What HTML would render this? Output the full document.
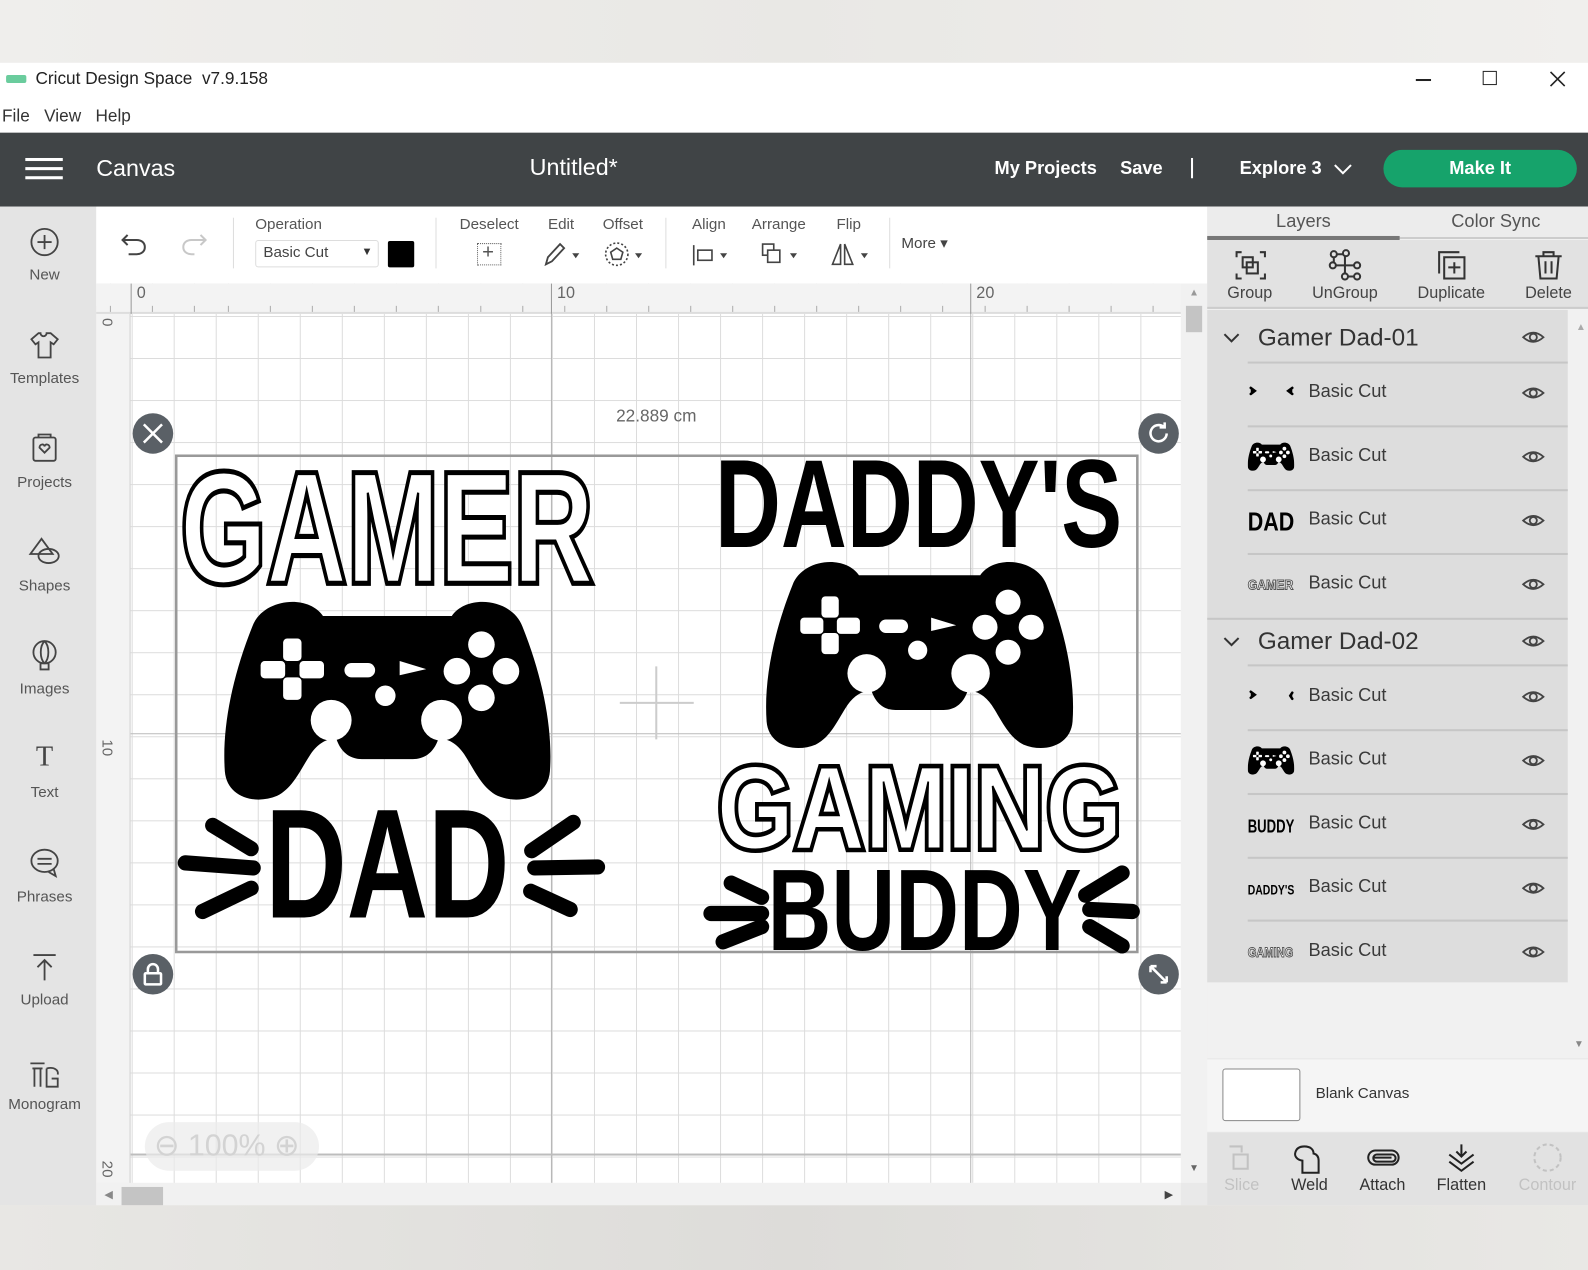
<!DOCTYPE html>
<html><head><meta charset="utf-8"><style>
*{margin:0;padding:0;box-sizing:border-box}
html,body{width:1588px;height:1270px;overflow:hidden;background:#ecebe8}
#w{position:absolute;left:0;top:0;width:1568px;height:1254px;transform:scale(1.01276);transform-origin:0 0;font-family:"Liberation Sans",sans-serif}
.a{position:absolute}
.t{position:absolute;white-space:nowrap}
.lbl{font-size:15px;color:#555;transform:translateX(-50%)}
.side .t{font-size:15px;color:#555;transform:translateX(-50%)}
.sep{position:absolute;height:2px;background:#c6c6c6;left:1232px;width:316px}
.bc{position:absolute;left:1292px;font-size:18px;color:#3a3a3a}
</style></head><body><div id="w">
<div class="a" style="left:0;top:0;width:1568px;height:62px;background:linear-gradient(90deg,#efeeec,#e9e8e5,#f0efed)"></div>
<div class="a" style="left:0;top:1190px;width:1568px;height:64px;background:linear-gradient(90deg,#e8e7e4,#dddcd9,#e9e8e5)"></div>
<div class="a" style="left:0;top:62px;width:1568px;height:69px;background:#fff"></div>
<div class="a" style="left:6px;top:74px;width:20px;height:8px;background:#2bb673;border-radius:2px;opacity:.7"></div>
<div class="t" style="left:35px;top:68px;font-size:17px;color:#222">Cricut Design Space&nbsp;&nbsp;v7.9.158</div>
<div class="a" style="left:1398px;top:78px;width:15px;height:1.5px;background:#222"></div>
<div class="a" style="left:1464px;top:70px;width:14px;height:14px;border:1.5px solid #222"></div>
<svg class="a" style="left:1530px;top:70px" width="16" height="16"><path d="M1 1L15 15M15 1L1 15" stroke="#222" stroke-width="1.6"/></svg>
<div class="t" style="left:2px;top:105px;font-size:17px;color:#333">File&nbsp;&nbsp;&nbsp;View&nbsp;&nbsp;&nbsp;Help</div>
<div class="a" style="left:0;top:131px;width:1568px;height:73px;background:#404446"></div>
<div class="a" style="left:25px;top:156px;width:37px;height:3px;background:#fff;box-shadow:0 9px 0 #fff,0 18px 0 #fff"></div>
<div class="t" style="left:95px;top:153px;font-size:23px;color:#fff">Canvas</div>
<div class="t" style="left:523px;top:152px;font-size:23px;color:#fff">Untitled*</div>
<div class="t" style="left:982px;top:156px;font-size:18px;color:#fff;font-weight:bold">My Projects</div>
<div class="t" style="left:1106px;top:156px;font-size:18px;color:#fff;font-weight:bold">Save</div>
<div class="a" style="left:1176px;top:156px;width:2px;height:20px;background:#fff"></div>
<div class="t" style="left:1224px;top:156px;font-size:18px;color:#fff;font-weight:bold">Explore 3</div>
<svg class="a" style="left:1316px;top:160px" width="20" height="14"><path d="M2 3L10 11L18 3" stroke="#fff" stroke-width="2" fill="none"/></svg>
<div class="a" style="left:1366px;top:148px;width:191px;height:37px;background:#16a36b;border-radius:19px;color:#fff;font-size:18px;font-weight:bold;text-align:center;line-height:37px">Make It</div>
<div class="a side" style="left:0;top:204px;width:95px;height:986px;background:#e4e4e4">
<svg class="a" style="left:29px;top:20px" width="30" height="30" fill="none" stroke="#444" stroke-width="1.8"><circle cx="15" cy="15" r="13"/><path d="M15 8v14M8 15h14"/></svg>
<div class="t" style="left:44px;top:59px">New</div>
<svg class="a" style="left:28px;top:122px" width="32" height="30" fill="none" stroke="#444" stroke-width="1.8"><path d="M10 3L3 9l4 5 3-2v15h12V12l3 2 4-5-7-6h-4c0 2-2 3-3 3s-3-1-3-3z"/></svg>
<div class="t" style="left:44px;top:161px">Templates</div>
<svg class="a" style="left:30px;top:222px" width="28" height="32" fill="none" stroke="#444" stroke-width="1.8"><rect x="3" y="6" width="22" height="23" rx="2"/><path d="M8 6V3h12v3M9 16c0-4 5-4 5-1 0-3 5-3 5 1l-5 5z"/></svg>
<div class="t" style="left:44px;top:264px">Projects</div>
<svg class="a" style="left:27px;top:325px" width="34" height="32" fill="none" stroke="#444" stroke-width="1.8"><path d="M14 3L3 18h22z"/><ellipse cx="21" cy="20" rx="10" ry="7"/></svg>
<div class="t" style="left:44px;top:366px">Shapes</div>
<svg class="a" style="left:30px;top:427px" width="28" height="34" fill="none" stroke="#444" stroke-width="1.8"><circle cx="14" cy="13" r="11"/><path d="M14 2c-5 5-5 17 0 22M14 2c5 5 5 17 0 22M10 24h8v6h-8z"/></svg>
<div class="t" style="left:44px;top:468px">Images</div>
<div class="t" style="left:44px;top:528px;font-size:28px;color:#444;font-family:'Liberation Serif',serif">T</div>
<div class="t" style="left:44px;top:570px">Text</div>
<svg class="a" style="left:28px;top:633px" width="32" height="30" fill="none" stroke="#444" stroke-width="1.8"><ellipse cx="16" cy="13" rx="13" ry="11"/><path d="M9 11h14M9 16h14M20 24l7 4-2-7"/></svg>
<div class="t" style="left:44px;top:673px">Phrases</div>
<svg class="a" style="left:30px;top:736px" width="28" height="30" fill="none" stroke="#444" stroke-width="1.8"><path d="M3 3h22M14 28V9M7 15l7-7 7 7"/></svg>
<div class="t" style="left:44px;top:775px">Upload</div>
<svg class="a" style="left:28px;top:843px" width="32" height="30" fill="none" stroke="#444" stroke-width="1.8"><path d="M2 3h14M4 8h10M6 8v18M12 8v18M18 8c8-2 12 2 11 6M18 8v18h11v-8h-6"/></svg>
<div class="t" style="left:44px;top:878px">Monogram</div>
</div>
<div class="a" style="left:95px;top:204px;width:1097px;height:76px;background:#fff"></div>
<svg class="a" style="left:118px;top:228px" width="90" height="28" fill="none" stroke-width="2"><path d="M8 4L3 9l5 5M3 9h14c5 0 8 3 8 7s-3 7-8 7H9" stroke="#444"/><path d="M80 4l5 5-5 5M85 9H71c-5 0-8 3-8 7s3 7 8 7h3" stroke="#c8c8c8"/></svg>
<div class="a" style="left:230px;top:215px;width:1px;height:50px;background:#ddd"></div>
<div class="t" style="left:252px;top:213px;font-size:15px;color:#555">Operation</div>
<div class="a" style="left:252px;top:237px;width:122px;height:27px;border:1px solid #ddd;border-radius:3px"></div>
<div class="t" style="left:260px;top:241px;font-size:15px;color:#444">Basic Cut</div>
<div class="t" style="left:357px;top:243px;font-size:11px;color:#333">▼</div>
<div class="a" style="left:383px;top:238px;width:26px;height:26px;background:#000;border-radius:2px"></div>
<div class="a" style="left:430px;top:215px;width:1px;height:50px;background:#ddd"></div>
<div class="t lbl" style="left:483px;top:213px">Deselect</div>
<div class="t lbl" style="left:554px;top:213px">Edit</div>
<div class="t lbl" style="left:615px;top:213px">Offset</div>
<div class="a" style="left:471px;top:240px;width:24px;height:22px;border:1.5px dotted #666"></div>
<div class="t" style="left:476px;top:238px;font-size:20px;color:#555">+</div>
<svg class="a" style="left:536px;top:238px" width="44" height="26" fill="none" stroke="#444" stroke-width="1.8"><path d="M3 23l2-7L17 3l4 4L9 20z"/><path d="M29 12h7l-3.5 5z" fill="#444" stroke="none"/></svg>
<svg class="a" style="left:596px;top:238px" width="44" height="28" fill="none" stroke="#444" stroke-width="1.6"><path d="M13 7l6 4-2 7H9L7 11z"/><circle cx="13" cy="13" r="11" stroke-dasharray="2 2"/><path d="M31 12h7l-3.5 5z" fill="#444" stroke="none"/></svg>
<div class="a" style="left:657px;top:215px;width:1px;height:50px;background:#ddd"></div>
<div class="t lbl" style="left:700px;top:213px">Align</div>
<div class="t lbl" style="left:769px;top:213px">Arrange</div>
<div class="t lbl" style="left:838px;top:213px">Flip</div>
<svg class="a" style="left:682px;top:240px" width="42" height="24" fill="none" stroke="#444" stroke-width="1.6"><path d="M3 2v20"/><rect x="7" y="7" width="14" height="10"/><path d="M29 10h7l-3.5 5z" fill="#444" stroke="none"/></svg>
<svg class="a" style="left:750px;top:238px" width="42" height="26" fill="none" stroke="#444" stroke-width="1.6"><rect x="3" y="3" width="11" height="11"/><rect x="8" y="9" width="12" height="12" fill="#fff"/><path d="M30 12h7l-3.5 5z" fill="#444" stroke="none"/></svg>
<svg class="a" style="left:820px;top:238px" width="42" height="26" fill="none" stroke="#444" stroke-width="1.6"><path d="M10 3L2 23h8zM14 3l8 20h-8z"/><path d="M30 12h7l-3.5 5z" fill="#444" stroke="none"/></svg>
<div class="a" style="left:878px;top:215px;width:1px;height:50px;background:#ddd"></div>
<div class="t" style="left:890px;top:231px;font-size:15px;color:#444">More ▾</div>
<div class="a" style="left:95px;top:280px;width:1071px;height:30px;background:#f3f3f3;border-bottom:2px solid #ddd;background-image:repeating-linear-gradient(90deg,#aaa 0 1px,transparent 1px 41.5px);background-position:130px 0;background-size:auto 30px"></div>
<div class="a" style="left:95px;top:280px;width:1071px;height:22px;background:#f3f3f3"></div>
<div class="a" style="left:129px;top:280px;width:1px;height:30px;background:#999"></div>
<div class="a" style="left:544px;top:280px;width:1px;height:30px;background:#999"></div>
<div class="a" style="left:958px;top:280px;width:1px;height:30px;background:#999"></div>
<div class="t" style="left:135px;top:281px;font-size:16px;color:#666">0</div>
<div class="t" style="left:550px;top:281px;font-size:16px;color:#666">10</div>
<div class="t" style="left:964px;top:281px;font-size:16px;color:#666">20</div>
<div class="a" style="left:95px;top:310px;width:34px;height:858px;background:#f3f3f3;border-right:1px solid #ccc"></div>
<div class="t" style="left:98px;top:314px;font-size:15px;color:#666;transform:rotate(90deg);transform-origin:8px 8px">0</div>
<div class="t" style="left:98px;top:730px;font-size:15px;color:#666;transform:rotate(90deg);transform-origin:8px 8px">10</div>
<div class="t" style="left:98px;top:1146px;font-size:15px;color:#666;transform:rotate(90deg);transform-origin:8px 8px">20</div>
<div class="a" style="left:129px;top:310px;width:1037px;height:858px;background-color:#fff;background-image:linear-gradient(#dcdcdc 1px,transparent 1px),linear-gradient(90deg,#dcdcdc 1px,transparent 1px);background-size:41.5px 41.5px;background-position:1px 2px"></div>
<div class="a" style="left:544px;top:310px;width:1px;height:858px;background:#b5b5b5"></div>
<div class="a" style="left:958px;top:310px;width:1px;height:858px;background:#b5b5b5"></div>
<div class="a" style="left:129px;top:724px;width:1037px;height:1px;background:#bbb"></div>
<div class="a" style="left:129px;top:1139px;width:1037px;height:2px;background:#bdbdbd"></div>
<div class="a" style="left:1166px;top:280px;width:26px;height:888px;background:#f1f1f1"></div>
<div class="a" style="left:1171px;top:302px;width:16px;height:26px;background:#c4c4c4"></div>
<div class="t" style="left:1174px;top:284px;font-size:10px;color:#999">▲</div>
<div class="t" style="left:1174px;top:1148px;font-size:10px;color:#666">▼</div>
<div class="a" style="left:95px;top:1168px;width:1071px;height:22px;background:#f1f1f1"></div>
<div class="a" style="left:120px;top:1172px;width:41px;height:18px;background:#c4c4c4"></div>
<div class="t" style="left:103px;top:1173px;font-size:11px;color:#888">◀</div>
<div class="t" style="left:1150px;top:1173px;font-size:11px;color:#444">▶</div>
<div class="a" style="left:1166px;top:1168px;width:26px;height:22px;background:#e9e9e9"></div>
<div class="a" style="left:143px;top:1108px;width:172px;height:48px;background:rgba(235,235,235,.7);border-radius:24px"></div>
<div class="t" style="left:152px;top:1114px;font-size:30px;color:#d3d3d3">⊖ 100% ⊕</div>
<svg class="a" style="left:0;top:0" width="1568" height="1254">
<defs>
<symbol id="ctl" viewBox="0 0 320 200">
<path d="M28,30 C38,3 82,-2 97,20 L223,20 C238,-2 282,3 292,30 C312,80 322,130 319,172 C317,197 290,205 268,196 C252,188 245,170 235,155 C228,145 220,140 210,140 C205,155 195,160 185,160 L135,160 C125,160 115,155 110,140 C100,140 92,145 85,155 C75,170 68,188 52,196 C30,205 3,197 1,172 C-2,130 8,80 28,30 Z" fill="#000"/>
<g fill="#fff"><rect x="58" y="42" width="18" height="22" rx="4"/><rect x="58" y="80" width="18" height="22" rx="4"/><rect x="36" y="64" width="24" height="17" rx="4"/><rect x="74" y="64" width="24" height="17" rx="4"/>
<rect x="118" y="66" width="30" height="14" rx="7"/><path d="M172,64L198,72L172,78Z"/><circle cx="158" cy="98" r="10"/>
<circle cx="252" cy="48" r="13"/><circle cx="228" cy="74" r="13"/><circle cx="276" cy="74" r="13"/><circle cx="252" cy="100" r="13"/>
<circle cx="105" cy="122" r="20"/><circle cx="213" cy="122" r="20"/></g>
</symbol>
</defs>
<rect x="174" y="450" width="949" height="490" fill="none" stroke="#999" stroke-width="2.5"/>
<line x1="612" y1="694" x2="685" y2="694" stroke="#ccc" stroke-width="2"/><line x1="648" y1="658" x2="648" y2="730" stroke="#ccc" stroke-width="2"/>
<text x="178" y="575" font-family="Liberation Sans" font-weight="bold" font-size="156" textLength="408" lengthAdjust="spacingAndGlyphs" fill="#fff" stroke="#000" stroke-width="7" paint-order="stroke">GAMER</text>
<text x="178" y="575" font-family="Liberation Sans" font-weight="bold" font-size="156" textLength="408" lengthAdjust="spacingAndGlyphs" fill="#fff" stroke="#000" stroke-width="3">GAMER</text>
<use href="#ctl" x="221" y="588" width="323" height="202"/>
<text x="262" y="906" font-family="Liberation Sans" font-weight="bold" font-size="154" textLength="241" lengthAdjust="spacingAndGlyphs">DAD</text>
<g stroke="#000" stroke-width="15" stroke-linecap="round">
<path d="M210 815L248 838M183 852L250 857M200 900L248 877M566 812L525 840M590 856L528 857M563 898L524 880"/>
<path d="M722 872L752 886M702 902L752 902M714 930L752 915M1108 862L1072 884M1118 900L1076 898M1108 934L1076 915"/>
</g>
<text x="706" y="540" font-family="Liberation Sans" font-weight="bold" font-size="124" textLength="402" lengthAdjust="spacingAndGlyphs">DADDY'S</text>
<use href="#ctl" x="756" y="548" width="304" height="192"/>
<text x="708" y="838" font-family="Liberation Sans" font-weight="bold" font-size="116" textLength="400" lengthAdjust="spacingAndGlyphs" fill="#fff" stroke="#000" stroke-width="7">GAMING</text>
<text x="708" y="838" font-family="Liberation Sans" font-weight="bold" font-size="116" textLength="400" lengthAdjust="spacingAndGlyphs" fill="#fff" stroke="#000" stroke-width="2">GAMING</text>
<text x="758" y="938" font-family="Liberation Sans" font-weight="bold" font-size="115" textLength="310" lengthAdjust="spacingAndGlyphs">BUDDY</text>
<text x="648" y="416" font-family="Liberation Sans" font-size="17" fill="#666" text-anchor="middle">22.889 cm</text>
<g fill="#5a6066"><circle cx="151" cy="428" r="20"/><circle cx="1144" cy="428" r="20"/><circle cx="151" cy="962" r="20"/><circle cx="1144" cy="962" r="20"/></g>
<g stroke="#fff" stroke-width="2.5" fill="none"><path d="M142 419l18 18M160 419l-18 18"/>
<path d="M1152 428a8 8 0 1 1-3-6.5M1150 417v5h-5"/>
<rect x="143" y="961" width="16" height="11" rx="1"/><path d="M146 961v-4a5 5 0 0 1 10 0v4"/>
<path d="M1136 954l16 16M1136 954h6M1136 954v6M1152 970h-6M1152 970v-6"/></g>
</svg>
<div class="a" style="left:1192px;top:204px;width:376px;height:986px;background:#f1f1f1"></div>
<div class="a" style="left:1192px;top:204px;width:376px;height:32px;background:#ececec"></div>
<div class="t" style="left:1287px;top:208px;font-size:18px;color:#555;transform:translateX(-50%)">Layers</div>
<div class="t" style="left:1477px;top:208px;font-size:18px;color:#555;transform:translateX(-50%)">Color Sync</div>
<div class="a" style="left:1192px;top:234px;width:376px;height:2px;background:#ccc"></div>
<div class="a" style="left:1192px;top:233px;width:190px;height:4px;background:#777"></div>
<div class="a" style="left:1192px;top:237px;width:376px;height:68px;background:#e2e2e2;border-bottom:2px solid #ccc"></div>
<svg class="a" style="left:1218px;top:246px" width="34" height="32" fill="none" stroke="#333" stroke-width="2"><path d="M3 8V3h5M26 3h5v5M31 24v5h-5M8 29H3v-5"/><rect x="9" y="8" width="10" height="10"/><rect x="13" y="13" width="11" height="11"/></svg>
<svg class="a" style="left:1310px;top:245px" width="36" height="32" fill="none" stroke="#333" stroke-width="2"><circle cx="7" cy="6" r="3"/><circle cx="19" cy="5" r="3"/><circle cx="6" cy="17" r="3"/><circle cx="30" cy="17" r="3"/><circle cx="18" cy="28" r="3"/><circle cx="30" cy="28" r="3"/><path d="M10 6h6M7 9v5M9 17h18M18 8v17M21 28h6"/></svg>
<svg class="a" style="left:1418px;top:246px" width="32" height="32" fill="none" stroke="#333" stroke-width="2"><path d="M3 24V3h20"/><rect x="8" y="8" width="20" height="21"/><path d="M18 13v11M12 18h12"/></svg>
<svg class="a" style="left:1514px;top:246px" width="30" height="32" fill="none" stroke="#333" stroke-width="2"><path d="M2 7h26M10 7V3h10v4M5 7l2 22h16l2-22M12 12v12M18 12v12"/></svg>
<div class="t lbl" style="left:1234px;top:281px;font-size:16px;color:#444">Group</div>
<div class="t lbl" style="left:1328px;top:281px;font-size:16px;color:#444">UnGroup</div>
<div class="t lbl" style="left:1433px;top:281px;font-size:16px;color:#444">Duplicate</div>
<div class="t lbl" style="left:1529px;top:281px;font-size:16px;color:#444">Delete</div>
<div class="a" style="left:1192px;top:306px;width:356px;height:664px;background:#dddddd"></div>
<div class="t" style="left:1556px;top:318px;font-size:10px;color:#aaa">▲</div>
<div class="t" style="left:1554px;top:1026px;font-size:10px;color:#888">▼</div>
<svg class="a" style="left:1206px;top:326px" width="20" height="14"><path d="M3 4l7 7 7-7" stroke="#333" stroke-width="2" fill="none"/></svg>
<div class="t" style="left:1242px;top:320px;font-size:24px;color:#333">Gamer Dad-01</div>
<svg class="a" style="left:1206px;top:626px" width="20" height="14"><path d="M3 4l7 7 7-7" stroke="#333" stroke-width="2" fill="none"/></svg>
<div class="t" style="left:1242px;top:620px;font-size:24px;color:#333">Gamer Dad-02</div>
<div class="sep" style="top:357px"></div><div class="sep" style="top:420px"></div><div class="sep" style="top:483px"></div><div class="sep" style="top:546px"></div>
<div class="sep" style="top:610px;left:1192px;width:356px"></div>
<div class="sep" style="top:656px"></div><div class="sep" style="top:720px"></div><div class="sep" style="top:783px"></div><div class="sep" style="top:846px"></div><div class="sep" style="top:908px"></div>
<div class="bc" style="top:376px">Basic Cut</div><div class="bc" style="top:439px">Basic Cut</div><div class="bc" style="top:502px">Basic Cut</div><div class="bc" style="top:565px">Basic Cut</div>
<div class="bc" style="top:676px">Basic Cut</div><div class="bc" style="top:739px">Basic Cut</div><div class="bc" style="top:802px">Basic Cut</div><div class="bc" style="top:865px">Basic Cut</div><div class="bc" style="top:928px">Basic Cut</div>
<svg class="a" style="left:0;top:0;pointer-events:none" width="1568" height="1254">
<defs><g id="eye" fill="none" stroke="#444" stroke-width="1.8"><path d="M-10 0Q0-9 10 0Q0 9-10 0Z"/><circle r="3.5"/></g></defs>
<g><use href="#eye" x="1514" y="333"/><use href="#eye" x="1514" y="388"/><use href="#eye" x="1514" y="451"/><use href="#eye" x="1514" y="514"/><use href="#eye" x="1514" y="577"/>
<use href="#eye" x="1514" y="633"/><use href="#eye" x="1514" y="688"/><use href="#eye" x="1514" y="751"/><use href="#eye" x="1514" y="814"/><use href="#eye" x="1514" y="877"/><use href="#eye" x="1514" y="940"/></g>
<g stroke="#000" stroke-width="2.5" stroke-linecap="round"><path d="M1235 383l4 3-4 3M1276 383l-4 3 4 3M1235 683l4 3-4 3M1276 684l-2 3 2 3"/></g>
<use href="#ctl" x="1232" y="436" width="46" height="29"/>
<use href="#ctl" x="1232" y="736" width="46" height="29"/>
<text x="1232" y="524" font-family="Liberation Sans" font-weight="bold" font-size="26" textLength="46" lengthAdjust="spacingAndGlyphs">DAD</text>
<text x="1232" y="822" font-family="Liberation Sans" font-weight="bold" font-size="18" textLength="46" lengthAdjust="spacingAndGlyphs">BUDDY</text>
<text x="1232" y="883" font-family="Liberation Sans" font-weight="bold" font-size="14" textLength="46" lengthAdjust="spacingAndGlyphs">DADDY'S</text>
<text x="1232" y="582" font-family="Liberation Sans" font-weight="bold" font-size="14" textLength="45" lengthAdjust="spacingAndGlyphs" fill="#fff" stroke="#555" stroke-width="1">GAMER</text>
<text x="1232" y="945" font-family="Liberation Sans" font-weight="bold" font-size="14" textLength="45" lengthAdjust="spacingAndGlyphs" fill="#fff" stroke="#555" stroke-width="1">GAMING</text>
</svg>
<div class="a" style="left:1192px;top:1045px;width:376px;height:72px;background:#f5f5f5;border-top:1px solid #e6e6e6"></div>
<div class="a" style="left:1207px;top:1055px;width:77px;height:52px;background:#fff;border:1px solid #888;border-radius:3px"></div>
<div class="t" style="left:1299px;top:1071px;font-size:15px;color:#333">Blank Canvas</div>
<div class="a" style="left:1192px;top:1118px;width:376px;height:72px;background:#e2e2e2"></div>
<svg class="a" style="left:1210px;top:1128px" width="340" height="32" fill="none" stroke-width="2">
<g stroke="#c2c2c2"><path d="M4 4h12v6M8 26h14V12H8z"/></g>
<path d="M78 4c6 0 9 3 9 7 4 1 5 4 5 7v12H76V18c-6-1-8-5-7-8 1-4 4-6 9-6z" stroke="#222"/>
<g stroke="#222"><rect x="141" y="8" width="30" height="14" rx="7"/><path d="M146 15h18"/><rect x="146" y="12" width="22" height="7" rx="3.5"/></g>
<g stroke="#222"><path d="M233 2v12M228 9l5 5 5-5M221 12l12 9 12-9M221 19l12 9 12-9"/></g>
<circle cx="318" cy="15" r="13" stroke="#c2c2c2" stroke-dasharray="4 3"/>
</svg>
<div class="t lbl" style="left:1226px;top:1162px;font-size:16px;color:#c2c2c2">Slice</div>
<div class="t lbl" style="left:1293px;top:1162px;font-size:16px;color:#333">Weld</div>
<div class="t lbl" style="left:1365px;top:1162px;font-size:16px;color:#333">Attach</div>
<div class="t lbl" style="left:1443px;top:1162px;font-size:16px;color:#333">Flatten</div>
<div class="t lbl" style="left:1528px;top:1162px;font-size:16px;color:#c2c2c2">Contour</div>
</div></body></html>
